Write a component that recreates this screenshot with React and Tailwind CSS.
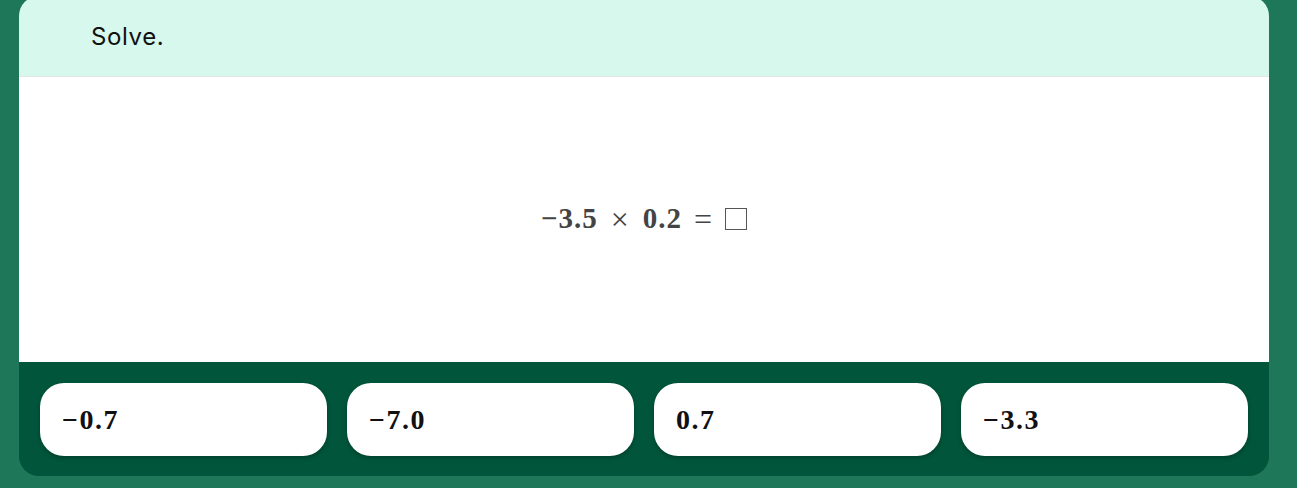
export default function App() {
  const answers = ["−0.7", "−7.0", "0.7", "−3.3"];
  return (
    <div className="w-[1297px] h-[488px] bg-[#1e7758] overflow-hidden">
      <div className="ml-[19px] mt-[-4px] w-[1250px] rounded-[20px] overflow-hidden flex flex-col">
        <div className="h-[81px] bg-[#d7f8ed] border-b border-[#e3e6e4] flex items-center pl-[72px] pt-[1px]">
          <span className="text-[24px] text-[#111] font-['Inter',sans-serif] tracking-[0.6px]">Solve.</span>
        </div>
        <div className="h-[285px] bg-white flex items-center justify-center pb-[2px]">
          <span className="font-['Liberation_Serif',serif] font-bold text-[#444] text-[29px] flex items-center tracking-[1px]">
            <span>−3.5</span>
            <span className="font-normal text-[32px] mx-[13px]">×</span>
            <span>0.2</span>
            <span className="font-normal text-[32px] mx-[12px]">=</span>
            <span className="inline-block w-[22px] h-[22px] border-[1.5px] border-[#555]"></span>
          </span>
        </div>
        <div className="bg-[#01553a] px-[21px] pt-[21px] pb-[20px] grid grid-cols-4 gap-[20px]">
          {answers.map((a) => (
            <div
              key={a}
              className="h-[73px] bg-white rounded-[24px] shadow-[0_2px_4px_rgba(0,0,0,0.25)] flex items-center pl-[22px]"
            >
              <span className="font-['Liberation_Serif',serif] font-bold text-[28px] text-[#111] tracking-[1.5px]">{a}</span>
            </div>
          ))}
        </div>
      </div>
    </div>
  );
}
